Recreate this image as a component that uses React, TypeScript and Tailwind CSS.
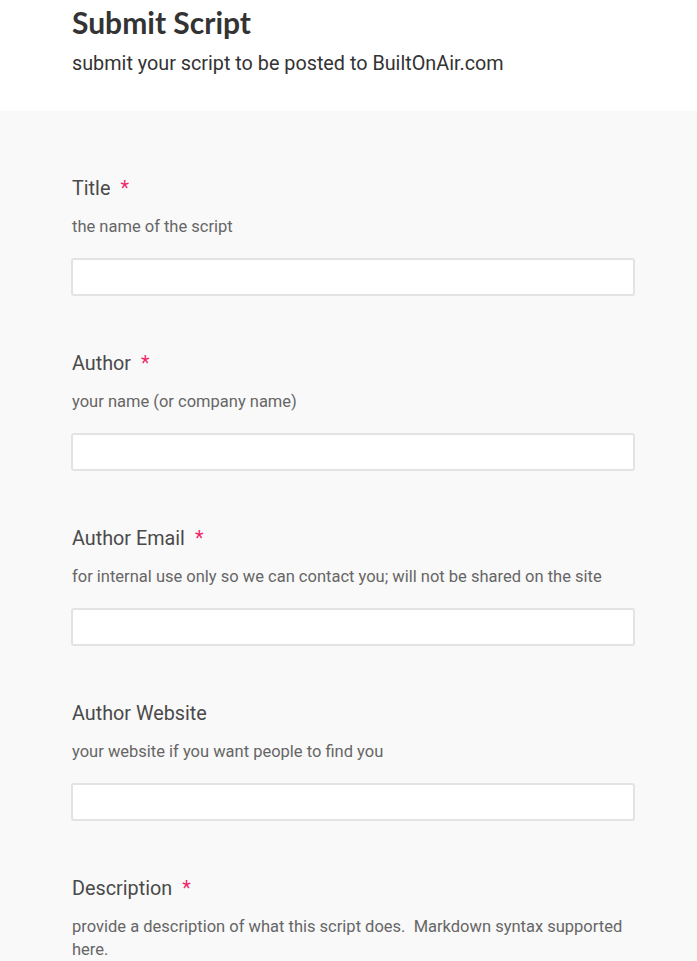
import React from "react";

const fields = [
  { label: "Title", req: true, help: "the name of the script" },
  { label: "Author", req: true, help: "your name (or company name)" },
  { label: "Author Email", req: true, help: "for internal use only so we can contact you; will not be shared on the site" },
  { label: "Author Website", req: false, help: "your website if you want people to find you" },
  { label: "Description", req: true, help: "provide a description of what this script does.\u00a0 Markdown syntax supported here." },
];

export default function App() {
  return (
    <div className="min-h-[961px] bg-[#f9f9f9] font-['Roboto',sans-serif]">
      <div className="h-[111px] bg-white px-[72px]">
        <h1 className="pt-[4px] text-[30px] leading-[36px] font-bold text-[#333] font-['Lato',sans-serif]">Submit Script</h1>
        <p className="mt-[10px] text-[19.8px] leading-[27px] text-[#333]">submit your script to be posted to BuiltOnAir.com</p>
      </div>
      <div className="px-[72px] pt-[66px]">
        <div className="w-[563px] flex flex-col gap-[56px]">
          {fields.map((f) => (
            <div key={f.label}>
              <div className="text-[19.8px] leading-[24px] text-[#4a4a4a]">
                {f.label}
                {f.req && <span className="ml-[10px] text-[#f0286a]">*</span>}
              </div>
              <p className="mt-[14px] text-[16.5px] leading-[23px] text-[#666]">{f.help}</p>
              {f.label !== "Description" && (
                <input className="mt-[20px] block h-[38px] w-[564px] -ml-px rounded-[3px] border-2 border-[#e3e3e3] bg-white" />
              )}
            </div>
          ))}
        </div>
      </div>
    </div>
  );
}
